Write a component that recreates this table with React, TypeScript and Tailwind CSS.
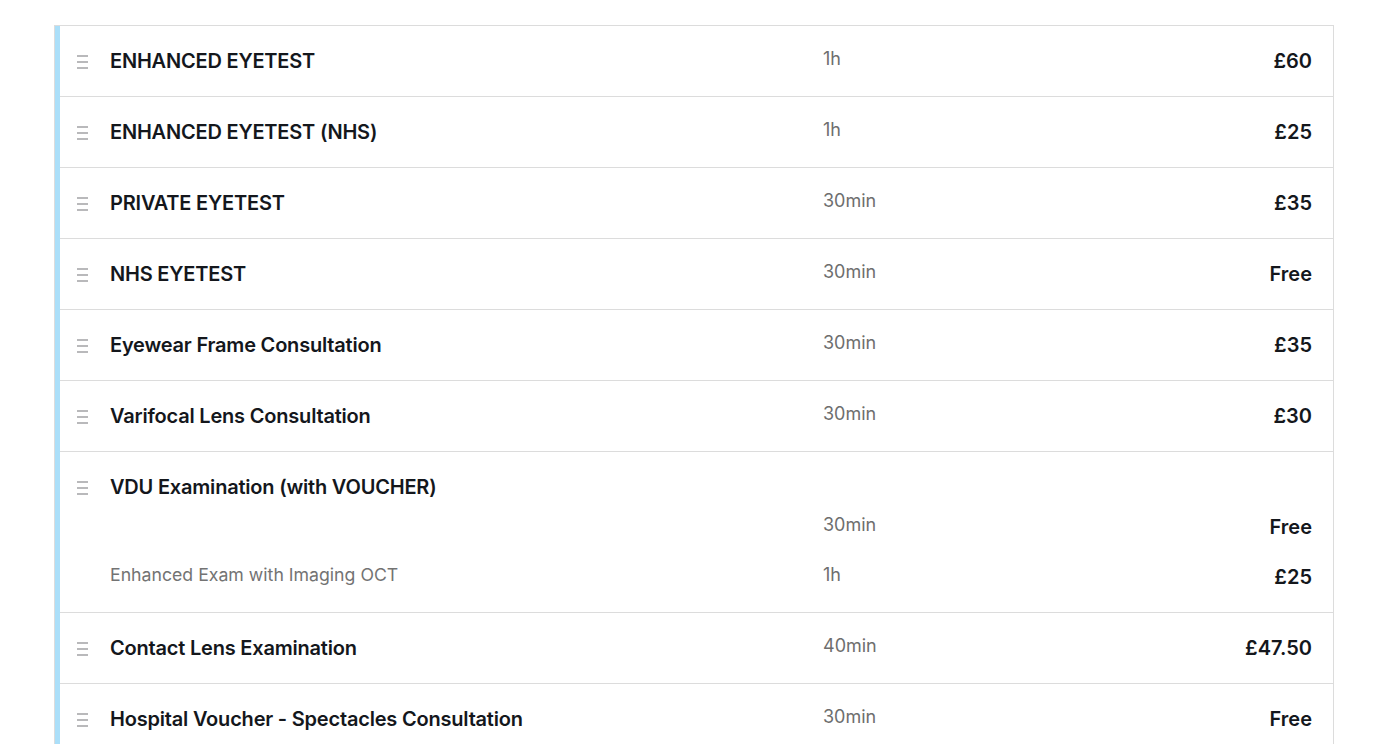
import React from "react";

type Line = { name?: string; sub?: boolean; duration?: string; price?: string };
type Row = { lines: Line[] };

const rows: Row[] = [
  { lines: [{ name: "ENHANCED EYETEST", duration: "1h", price: "£60" }] },
  { lines: [{ name: "ENHANCED EYETEST (NHS)", duration: "1h", price: "£25" }] },
  { lines: [{ name: "PRIVATE EYETEST", duration: "30min", price: "£35" }] },
  { lines: [{ name: "NHS EYETEST", duration: "30min", price: "Free" }] },
  { lines: [{ name: "Eyewear Frame Consultation", duration: "30min", price: "£35" }] },
  { lines: [{ name: "Varifocal Lens Consultation", duration: "30min", price: "£30" }] },
  {
    lines: [
      { name: "VDU Examination (with VOUCHER)" },
      { duration: "30min", price: "Free" },
      { name: "Enhanced Exam with Imaging OCT", sub: true, duration: "1h", price: "£25" },
    ],
  },
  { lines: [{ name: "Contact Lens Examination", duration: "40min", price: "£47.50" }] },
  { lines: [{ name: "Hospital Voucher - Spectacles Consultation", duration: "30min", price: "Free" }] },
];

function Handle() {
  return (
    <div className="flex flex-col gap-[4px] w-[11px] mt-[8px]">
      <div className="h-[2px] bg-[#b9b9bb]" />
      <div className="h-[2px] bg-[#b9b9bb]" />
      <div className="h-[2px] bg-[#b9b9bb]" />
    </div>
  );
}

export default function App() {
  return (
    <div className="min-h-screen bg-white pt-[25px] px-[54px]" style={{ fontFamily: "Inter, 'Noto Sans', sans-serif" }}>
      <div className="border border-[#dcdcdc] w-[1280px]">
        <div className="border-l-[5px] border-[#abdff9]">
          {rows.map((row, i) => (
            <div key={i} className="border-b border-[#dcdcdc] pt-[21px] pb-[21px] pr-[21px] flex flex-col gap-[12px]">
              {row.lines.map((l, j) => (
                <div key={j} className={"flex items-start " + (j === 2 ? "mt-[10px]" : "")}>
                  <div className="w-[50px] pl-[17px] shrink-0">{j === 0 && <Handle />}</div>
                  <div className="w-[713px] shrink-0">
                    {l.name && (
                      l.sub ? (
                        <div className="text-[17.7px] leading-[24px] text-[#737373]">{l.name}</div>
                      ) : (
                        <div className="text-[20px] leading-[28px] font-semibold text-[#14171c] tracking-[-0.2px]">{l.name}</div>
                      )
                    )}
                  </div>
                  <div className="flex-1 text-[18px] leading-[24px] text-[#6e6e6e]">{l.duration}</div>
                  <div className="text-[20px] leading-[28px] font-semibold text-[#14171c] text-right">{l.price}</div>
                </div>
              ))}
            </div>
          ))}
        </div>
      </div>
    </div>
  );
}
